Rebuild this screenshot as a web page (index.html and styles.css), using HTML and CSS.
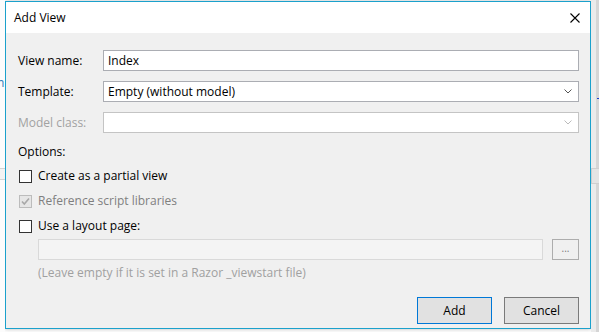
FILE: index.html
```html
<!DOCTYPE html>
<html>
<head>
<meta charset="utf-8">
<link rel="stylesheet" href="styles.css">
</head>
<body>
<div class="screen">
  <div class="left-strip">
    <span class="peek-text">n</span>
    <div class="peek-band"></div>
  </div>
  <div class="dialog">
    <div class="titlebar">
      <span class="title">Add View</span>
      <svg class="close" width="10" height="10" viewBox="0 0 10 10"><path d="M0.5 0.5L9.5 9.5M9.5 0.5L0.5 9.5" stroke="#000" stroke-width="1.1" fill="none"/></svg>
    </div>
    <div class="body">
      <div class="form">
        <label class="label">View name:</label>
        <div class="field"><span class="value">Index</span></div>
        <label class="label">Template:</label>
        <div class="field select"><span class="value">Empty (without model)</span>
          <svg class="chev" width="8" height="5" viewBox="0 0 8 5"><path d="M0.5 0.5L4 4L7.5 0.5" stroke="#555" stroke-width="1" fill="none"/></svg>
        </div>
        <label class="label disabled">Model class:</label>
        <div class="field select dis"><span class="value"></span>
          <svg class="chev" width="8" height="5" viewBox="0 0 8 5"><path d="M0.5 0.5L4 4L7.5 0.5" stroke="#bbb" stroke-width="1" fill="none"/></svg>
        </div>
      </div>
      <div class="options">Options:</div>
      <div class="checks">
        <div class="check-row"><span class="box"></span><span class="ctext">Create as a partial view</span></div>
        <div class="check-row"><span class="box box-dis"><svg width="11" height="11" viewBox="0 0 11 11"><path d="M2 5.5L4.3 8L9 2.5" stroke="#a8a8a8" stroke-width="1.6" fill="none"/></svg></span><span class="ctext disabled2">Reference script libraries</span></div>
        <div class="check-row"><span class="box"></span><span class="ctext">Use a layout page:</span></div>
      </div>
      <div class="layout-row">
        <div class="layout-input"></div>
        <div class="browse">...</div>
      </div>
      <div class="hint">(Leave empty if it is set in a Razor _viewstart file)</div>
      <div class="buttons">
        <div class="btn primary">Add</div>
        <div class="btn">Cancel</div>
      </div>
    </div>
  </div>
  <div class="right-strip">
    <div class="rs-light"></div>
    <div class="rs-dark"><span class="dot"></span><span class="rs-box"></span></div>
  </div>
</div>
</body>
</html>
```
FILE: styles.css
```css
html, body { margin: 0; padding: 0; }
body {
  width: 599px;
  height: 332px;
  overflow: hidden;
  background: #fdfdfd;
  font-family: "Open Sans", "Noto Sans", sans-serif;
  font-size: 12px;
  color: #000;
}
.screen {
  display: flex;
  height: 332px;
}
.left-strip {
  width: 5px;
  position: relative;
  background: #fcfcfc;
  overflow: hidden;
}
.peek-text {
  position: absolute;
  left: -3px;
  top: 74px;
  color: #2b7bb9;
  font-size: 12px;
}
.peek-band {
  position: absolute;
  left: 0;
  top: 168px;
  width: 5px;
  height: 10px;
  border-top: 1px solid #d4d4d4;
  border-bottom: 1px solid #d4d4d4;
  background: #f3f3f3;
}
.dialog {
  margin-top: 1px;
  width: 584px;
  height: 326px;
  border: 1px solid #1ba1cc;
  background: #f0f0f0;
  display: flex;
  flex-direction: column;
  box-shadow: 0 0 4px rgba(0,0,0,0.25);
}
.titlebar {
  height: 31px;
  background: #fff;
  display: flex;
  align-items: center;
  justify-content: space-between;
  padding: 0 10px 0 8px;
}
.title { font-size: 12px; line-height: 16px; }
.close { display: block; margin-right: 0; }
.body {
  padding: 17px 11px 0 12px;
}
.form {
  display: grid;
  grid-template-columns: 85px 1fr;
  grid-auto-rows: 21px;
  row-gap: 10px;
  align-items: center;
}
.label { line-height: 16px; }
.disabled { color: #a2a2a2; }
.field {
  box-sizing: border-box;
  height: 21px;
  background: #fff;
  border: 1px solid #abadb3;
  display: flex;
  align-items: center;
  justify-content: space-between;
  padding: 0 6px 0 4px;
}
.field.dis { border-color: #c4c4c4; }
.value { line-height: 16px; }
.chev { display: block; }
.options {
  margin-top: 11px;
  line-height: 16px;
}
.checks {
  margin-top: 9px;
  padding-left: 1px;
  display: flex;
  flex-direction: column;
  gap: 11px;
}
.check-row {
  display: flex;
  align-items: center;
  height: 14px;
}
.box {
  box-sizing: border-box;
  width: 13px;
  height: 13px;
  border: 1px solid #333;
  background: #fff;
  margin-right: 6px;
  display: flex;
  align-items: center;
  justify-content: center;
}
.box-dis {
  border-color: #bcbcbc;
  background: #e6e6e6;
}
.box-dis svg { display: block; }
.ctext { line-height: 16px; }
.disabled2 { color: #7f7f7f; }
.layout-row {
  margin-top: 6px;
  padding-left: 20px;
  display: flex;
  gap: 9px;
}
.layout-input {
  flex: 1;
  box-sizing: border-box;
  height: 21px;
  background: #f4f4f4;
  border: 1px solid #d9d9d9;
}
.browse {
  box-sizing: border-box;
  width: 27px;
  height: 21px;
  border: 1px solid #adadad;
  background: #f0f0f0;
  color: #7a7a7a;
  font-size: 10px;
  text-align: center;
  line-height: 17px;
}
.hint {
  margin-top: 5px;
  padding-left: 20px;
  line-height: 16px;
  color: #a0a0a0;
}
.buttons {
  margin-top: 16px;
  display: flex;
  justify-content: flex-end;
  gap: 12px;
}
.btn {
  box-sizing: border-box;
  width: 75px;
  height: 27px;
  background: #e1e1e1;
  border: 1px solid #7a7a7a;
  display: flex;
  align-items: center;
  justify-content: center;
  line-height: 16px;
}
.btn.primary { border-color: #0078d7; }
.right-strip {
  flex: 1;
  display: flex;
  margin-left: 0;
}
.rs-light { width: 5px; background: #ebebeb; }
.rs-dark { flex: 1; background: #d6d6d6; position: relative; }
.dot {
  position: absolute;
  left: 1px;
  top: 98px;
  width: 2px;
  height: 1px;
  background: #1a3fd0;
}
.rs-box {
  position: absolute;
  left: -5px;
  top: 168px;
  width: 8px;
  height: 14px;
  border: 1px solid #cfcfcf;
  background: #e4e4e4;
}
```
